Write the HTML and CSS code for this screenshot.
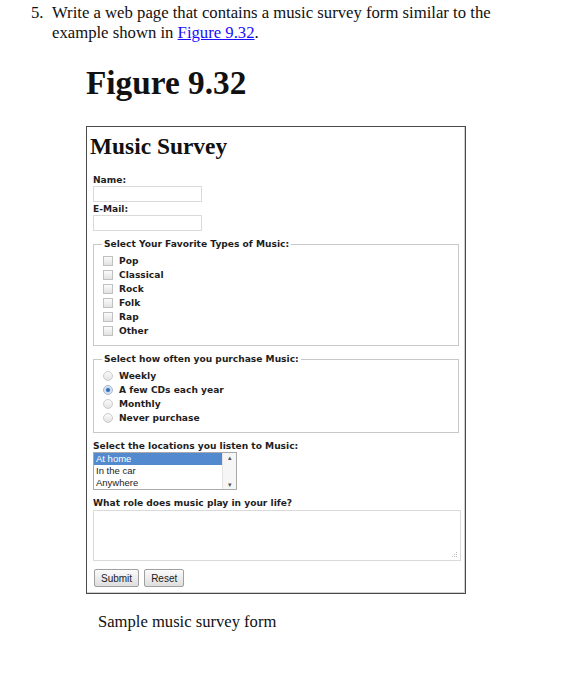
FILE: index.html
```html
<html>
    <head>
        <link rel="stylesheet" href="styles.css">
    </head>
    <body>
        <div class="question">
            <span class="num">5.</span>
            <p>
                <span class="line">Write a web page that contains a music survey form similar to the</span>
                <span class="line">example shown in <a href="#fig">Figure 9.32</a>.</span>
            </p>
        </div>
        <h1 class="figTitle" id="fig">Figure 9.32</h1>
        <div class="figure">
            <h2>Music Survey</h2>
            <form>
                <label class="lbl">Name:</label>
                <input type="text" class="txt">
                <label class="lbl">E-Mail:</label>
                <input type="text" class="txt">
                <fieldset>
                    <legend>Select Your Favorite Types of Music:</legend>
                    <div class="item"><input type="checkbox"> Pop</div>
                    <div class="item"><input type="checkbox"> Classical</div>
                    <div class="item"><input type="checkbox"> Rock</div>
                    <div class="item"><input type="checkbox"> Folk</div>
                    <div class="item"><input type="checkbox"> Rap</div>
                    <div class="item"><input type="checkbox"> Other</div>
                </fieldset>
                <fieldset>
                    <legend>Select how often you purchase Music:</legend>
                    <div class="item"><input type="radio" name="often"> Weekly</div>
                    <div class="item"><input type="radio" name="often" checked> A few CDs each year</div>
                    <div class="item"><input type="radio" name="often"> Monthly</div>
                    <div class="item"><input type="radio" name="often"> Never purchase</div>
                </fieldset>
                <label class="lbl">Select the locations you listen to Music:</label>
                <div class="listbox">
                    <div class="options">
                        <div class="opt selected">At home</div>
                        <div class="opt">In the car</div>
                        <div class="opt">Anywhere</div>
                    </div>
                    <div class="scroll">
                        <span class="arrow">&#9652;</span>
                        <span class="arrow">&#9662;</span>
                    </div>
                </div>
                <label class="lbl">What role does music play in your life?</label>
                <div class="areaWrap">
                    <textarea></textarea>
                    <!-- little dotted resize grip -->
                    <svg class="grip" width="6" height="6" viewBox="0 0 6 6">
                        <rect x="4" y="0" width="1" height="1" fill="#bbb"/>
                        <rect x="2" y="2" width="1" height="1" fill="#bbb"/>
                        <rect x="4" y="2" width="1" height="1" fill="#bbb"/>
                        <rect x="0" y="4" width="1" height="1" fill="#bbb"/>
                        <rect x="2" y="4" width="1" height="1" fill="#bbb"/>
                        <rect x="4" y="4" width="1" height="1" fill="#bbb"/>
                    </svg>
                </div>
                <div class="buttons">
                    <button type="button">Submit</button>
                    <button type="button">Reset</button>
                </div>
            </form>
        </div>
        <p class="caption">Sample music survey form</p>
    </body>
</html>
```

FILE: styles.css
```css
body{
    margin: 0;
    background: white;
    font-family: "Liberation Serif", serif;
    color: #111;
}
.question{
    display: flex;
    padding-top: 3px;
    font-size: 16.7px;
    line-height: 20px;
}
.question .num{
    width: 21px;
    margin-left: 31px;
}
.question p{
    margin: 0;
    width: 470px;
}
.question .line{
    display: block;
}
.question a{
    color: #1a0dff;
}
.figTitle{
    margin: 20px 0 0 86px;
    font-size: 33.3px;
    line-height: 40px;
}
.figure{
    margin: 23px 0 0 86px;
    width: 378px;
    border: 1px solid #4a4a4a;
    box-shadow: inset -1px -1px 0 #d0d0d0;
    padding: 0 0 6px 0;
}
.figure h2{
    margin: 6px 0 0 3px;
    font-size: 23.4px;
    line-height: 26px;
}
form{
    margin: 15px 0 0 6px;
    font-family: "DejaVu Sans", Verdana, sans-serif;
    font-size: 9.1px;
    font-weight: bold;
    color: #1e1e1e;
}
.lbl{
    display: block;
    line-height: 12px;
}
.txt{
    display: block;
    width: 109px;
    height: 16px;
    margin: 0 0 1px 0;
    padding: 0;
    border: 1px solid #dadada;
    box-sizing: border-box;
}
fieldset{
    width: 366px;
    box-sizing: border-box;
    margin: 7px 0 0 0;
    padding: 0 0 7px 8px;
    border: 1px solid #c8c8c8;
}
legend{
    padding: 0 2px;
    line-height: 12px;
}
.item{
    display: flex;
    align-items: center;
    height: 14px;
}
.item:first-of-type{
    margin-top: 4px;
}
input[type=checkbox], input[type=radio]{
    appearance: none;
    -webkit-appearance: none;
    width: 10px;
    height: 10px;
    margin: 0 6px 0 1px;
    border: 1px solid #c0c0c0;
    background: linear-gradient(#fbfbfb, #e2e2e2);
}
input[type=radio]{
    border-radius: 50%;
    border-color: #cccccc;
}
input[type=radio]:checked{
    background: radial-gradient(circle, #2e63a8 0, #3b76c0 1.5px, #c9d8ea 2.5px, #eef2f6 5px);
    border-color: #a8b8cc;
}
form > .lbl:nth-of-type(3){
    margin-top: 7px;
}
.listbox{
    display: flex;
    width: 144px;
    height: 38px;
    border: 1px solid #a9a9a9;
    box-sizing: border-box;
    font-family: "Liberation Sans", Arial, sans-serif;
    font-weight: normal;
    font-size: 9.5px;
    color: #222;
}
.options{
    flex: 1;
}
.opt{
    height: 12px;
    line-height: 12px;
    padding-left: 2px;
}
.opt.selected{
    background: #5289cf;
    color: white;
}
.scroll{
    width: 13px;
    border-left: 1px solid #e4e4e4;
    background: #f6f6f6;
    display: flex;
    flex-direction: column;
    justify-content: space-between;
    align-items: center;
    font-size: 7px;
    color: #555;
    line-height: 9px;
}
form > .lbl:nth-of-type(4){
    margin-top: 7px;
}
.areaWrap{
    position: relative;
    width: 368px;
    margin-top: 1px;
}
textarea{
    display: block;
    width: 368px;
    height: 51px;
    border: 1px solid #dadada;
    margin: 0;
    resize: none;
}
.grip{
    position: absolute;
    right: 3px;
    bottom: 3px;
}
.buttons{
    display: flex;
    gap: 5px;
    margin-top: 8px;
    padding-left: 1px;
}
button{
    font-family: "Liberation Sans", Arial, sans-serif;
    font-size: 10px;
    color: #222;
    height: 18px;
    padding: 0 6px;
    border: 1px solid #a0a0a0;
    border-radius: 2px;
    background: linear-gradient(#fbfbfb, #dedede);
}
.caption{
    margin: 18px 0 0 98px;
    font-size: 16.6px;
    line-height: 20px;
}
```
